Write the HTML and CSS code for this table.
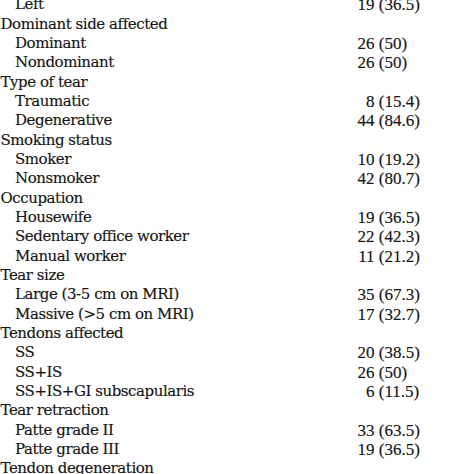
FILE: index.html
```html
<!DOCTYPE html>
<html>
<head>
<meta charset="utf-8">
<link rel="stylesheet" href="styles.css">
</head>
<body>
<div class="table">
  <div class="row sub"><span class="lab">Left</span><span class="val"><span class="n">19</span> (36.5)</span></div>
  <div class="row"><span class="lab">Dominant side affected</span><span class="val"></span></div>
  <div class="row sub"><span class="lab">Dominant</span><span class="val"><span class="n">26</span> (50)</span></div>
  <div class="row sub"><span class="lab">Nondominant</span><span class="val"><span class="n">26</span> (50)</span></div>
  <div class="row"><span class="lab">Type of tear</span><span class="val"></span></div>
  <div class="row sub"><span class="lab">Traumatic</span><span class="val"><span class="n">8</span> (15.4)</span></div>
  <div class="row sub"><span class="lab">Degenerative</span><span class="val"><span class="n">44</span> (84.6)</span></div>
  <div class="row"><span class="lab">Smoking status</span><span class="val"></span></div>
  <div class="row sub"><span class="lab">Smoker</span><span class="val"><span class="n">10</span> (19.2)</span></div>
  <div class="row sub"><span class="lab">Nonsmoker</span><span class="val"><span class="n">42</span> (80.7)</span></div>
  <div class="row"><span class="lab">Occupation</span><span class="val"></span></div>
  <div class="row sub"><span class="lab">Housewife</span><span class="val"><span class="n">19</span> (36.5)</span></div>
  <div class="row sub"><span class="lab">Sedentary office worker</span><span class="val"><span class="n">22</span> (42.3)</span></div>
  <div class="row sub"><span class="lab">Manual worker</span><span class="val"><span class="n">11</span> (21.2)</span></div>
  <div class="row"><span class="lab">Tear size</span><span class="val"></span></div>
  <div class="row sub"><span class="lab">Large (3-5 cm on MRI)</span><span class="val"><span class="n">35</span> (67.3)</span></div>
  <div class="row sub"><span class="lab">Massive (&gt;5 cm on MRI)</span><span class="val"><span class="n">17</span> (32.7)</span></div>
  <div class="row"><span class="lab">Tendons affected</span><span class="val"></span></div>
  <div class="row sub"><span class="lab">SS</span><span class="val"><span class="n">20</span> (38.5)</span></div>
  <div class="row sub"><span class="lab">SS+IS</span><span class="val"><span class="n">26</span> (50)</span></div>
  <div class="row sub"><span class="lab">SS+IS+GI subscapularis</span><span class="val"><span class="n">6</span> (11.5)</span></div>
  <div class="row"><span class="lab">Tear retraction</span><span class="val"></span></div>
  <div class="row sub"><span class="lab">Patte grade II</span><span class="val"><span class="n">33</span> (63.5)</span></div>
  <div class="row sub"><span class="lab">Patte grade III</span><span class="val"><span class="n">19</span> (36.5)</span></div>
  <div class="row"><span class="lab">Tendon degeneration</span><span class="val"></span></div>
</div>
</body>
</html>
```
FILE: styles.css
```css
html, body {
  margin: 0;
  padding: 0;
  background: #ffffff;
  overflow: hidden;
}
body {
  width: 474px;
  height: 474px;
  font-family: "DejaVu Serif", "Liberation Serif", serif;
  font-size: 15px;
  letter-spacing: -0.45px;
  color: #141414;
  -webkit-text-stroke: 0.15px #141414;
}
.table {
  margin-top: -4.7px;
  padding-left: 0.5px;
}
.row {
  display: grid;
  grid-template-columns: 357px 1fr;
  height: 19.33px;
  line-height: 19.33px;
  white-space: nowrap;
}
.sub .lab {
  padding-left: 14.5px;
}
.val {
  font-family: "Liberation Serif", serif;
  font-size: 17px;
  letter-spacing: 0;
}
.n {
  display: inline-block;
  width: 1em;
  text-align: right;
}
```
